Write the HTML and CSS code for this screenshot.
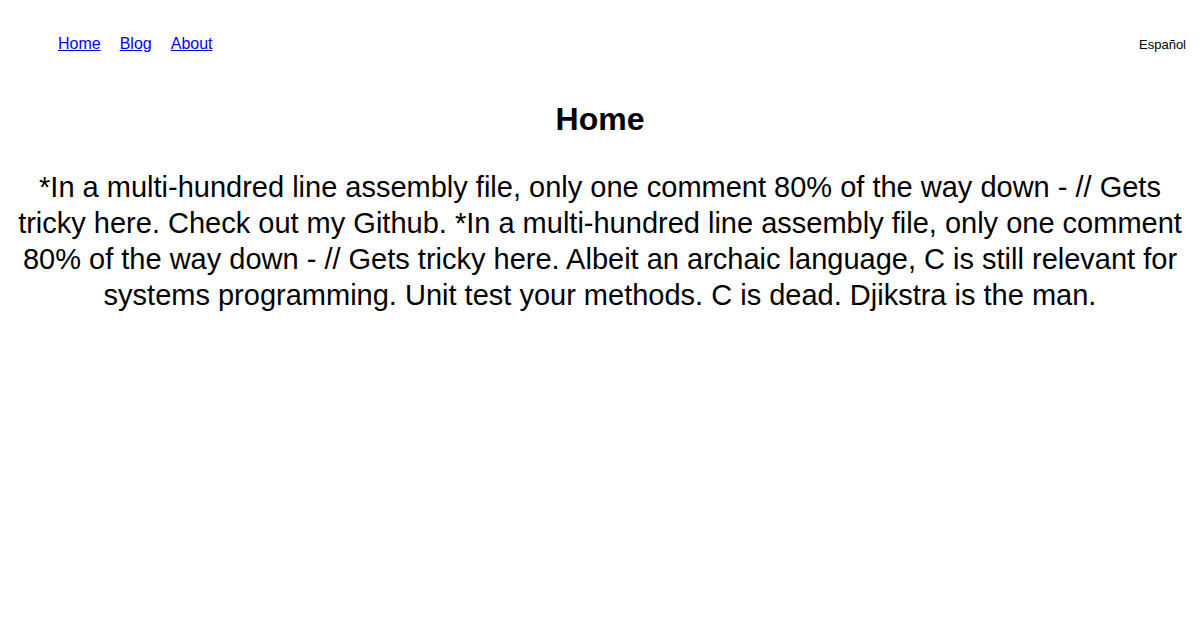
FILE: index.html
```html
<!DOCTYPE html>
<html>
<head>
<meta charset="utf-8">
<link rel="stylesheet" href="styles.css">
</head>
<body>
<header class="topbar">
  <nav class="nav">
    <a href="#">Home</a>
    <a href="#">Blog</a>
    <a href="#">About</a>
  </nav>
  <div class="lang">Español</div>
</header>
<main class="content">
  <h1 class="title">Home</h1>
  <p class="text">*In a multi-hundred line assembly file, only one comment 80% of the way down - // Gets tricky here. Check out my Github. *In a multi-hundred line assembly file, only one comment 80% of the way down - // Gets tricky here. Albeit an archaic language, C is still relevant for systems programming. Unit test your methods. C is dead. Djikstra is the man.</p>
</main>
</body>
</html>
```
FILE: styles.css
```css
html, body {
  margin: 0;
  padding: 0;
  background: #fff;
}
body {
  font-family: "Liberation Sans", Arial, sans-serif;
  color: #000;
}
.topbar {
  display: flex;
  justify-content: space-between;
  align-items: center;
  padding: 34px 14px 0 58px;
  height: 20px;
}
.nav {
  display: flex;
  gap: 19px;
  font-size: 16px;
}
.nav a {
  color: #0000ee;
}
.lang {
  font-size: 13px;
}
.content {
  padding: 0 8px;
  text-align: center;
}
.title {
  font-size: 32px;
  font-weight: bold;
  margin: 47px 0 0;
  line-height: 37px;
}
.text {
  font-size: 29px;
  line-height: 36px;
  margin: 31px 0 0;
}
```
